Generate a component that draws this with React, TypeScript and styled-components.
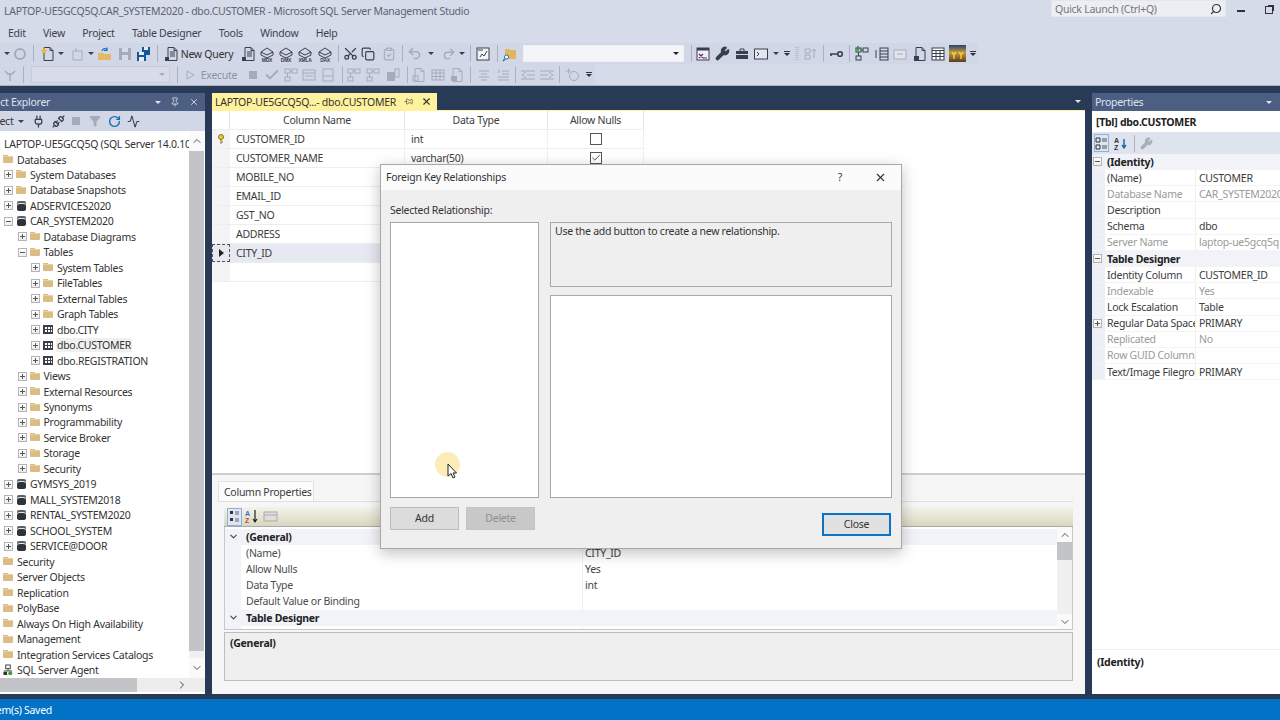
import React from 'react';
import styled, { createGlobalStyle } from 'styled-components';
import { Scissors, Copy, ClipboardCheck, Undo2, Redo2, Wrench, Search, X, Check, Pin, ChevronUp, ChevronDown, ChevronRight, Plug, Unplug, Filter, RotateCw, Activity } from 'lucide-react';

const UI_FONT = '"Noto Sans", "Open Sans", sans-serif';

const GlobalStyle = createGlobalStyle`
  html, body { margin: 0; padding: 0; background: #d6dbe9; }
  * { box-sizing: border-box; }
  #root { width: 1280px; height: 720px; overflow: hidden; }
`;

const Shell = styled.div`
  position: relative;
  width: 1280px;
  height: 720px;
  display: flex;
  flex-direction: column;
  overflow: hidden;
  background: #d6dbe9;
  font-family: ${UI_FONT};
  font-size: 10.5px;
  letter-spacing: -0.27px;
  color: #2c2c2c;
`;

/* ---------- title + menu ---------- */
const TitleRow = styled.div`
  height: 22px;
  flex: none;
  display: flex;
  align-items: flex-start;
  padding-left: 4px;
`;
const TitleText = styled.div`
  flex: 1;
  line-height: 22px;
  color: #5c6472;
  white-space: nowrap;
`;
const QuickLaunch = styled.div`
  width: 175px;
  height: 17px;
  background: #eceef4;
  border: 1px solid #e4e7ef;
  display: flex;
  align-items: center;
  justify-content: space-between;
  padding: 0 3px;
  color: #777;
`;
const WinControls = styled.div`
  width: 54px;
  height: 17px;
  display: flex;
  align-items: center;
  padding-left: 11px;
  gap: 20px;
`;
const MinBtn = styled.span`
  width: 8px;
  height: 2px;
  margin-top: 5px;
  background: #2a3240;
`;
const RestoreBtn = styled.span`
  width: 8px;
  height: 8px;
  margin-top: 3px;
  border: 1px solid #333;
  box-shadow: 2px -2px 0 -1px #333;
`;
const MenuRow = styled.div`
  height: 21px;
  flex: none;
  display: flex;
  align-items: center;
  gap: 17.3px;
  padding-left: 8px;
  color: #3a4250;
`;
const ToolRowBox = styled.div<{ $w: number }>`
  height: 21px;
  flex: none;
  display: flex;
  align-items: center;
  width: ${(p) => p.$w}px;
  background: #d1d7e6;
`;
const Slot = styled.span<{ $w: number; $gap: number }>`
  flex: none;
  width: ${(p) => p.$w}px;
  margin-left: ${(p) => p.$gap}px;
  display: flex;
  align-items: center;
  justify-content: center;
  white-space: nowrap;
`;
const ToolSep = styled.span`
  width: 1px;
  height: 17px;
  background: #a9b1c3;
`;
const DropArrow = styled.span`
  width: 0;
  height: 0;
  border-left: 3px solid transparent;
  border-right: 3px solid transparent;
  border-top: 3px solid ${(p) => p.color || '#3a3f4a'};
`;
const OverflowBtn = styled.span`
  width: 6px;
  height: 5px;
  border-top: 1px solid #333;
  display: flex;
  align-items: flex-end;
  justify-content: center;
  &::after {
    content: '';
    border-left: 3px solid transparent;
    border-right: 3px solid transparent;
    border-top: 3px solid #333;
  }
`;
const ToolLabel = styled.span<{ $off?: boolean }>`
  color: ${(p) => (p.$off ? '#8b93a3' : '#333')};
`;
const Combo = styled.span<{ $off?: boolean }>`
  width: 100%;
  height: 17px;
  background: ${(p) => (p.$off ? '#d8dce8' : '#f4f5f8')};
  border: 1px solid ${(p) => (p.$off ? '#c6ccda' : '#eef0f5')};
  display: flex;
  align-items: center;
  justify-content: flex-end;
  padding-right: 4px;
`;

/* ---------- workspace ---------- */
const Workspace = styled.div`
  flex: 1;
  min-height: 0;
  display: flex;
  background: #293a57;
  border-top: 1px solid #aab4c8;
  padding: 7px 0 5px;
`;
const Status = styled.div`
  height: 21px;
  flex: none;
  background: #0172c6;
  color: #fff;
  display: flex;
  align-items: center;
  overflow: hidden;
`;
const StatusText = styled.span`
  margin-left: -11px;
  white-space: nowrap;
`;
const Panel = styled.section<{ $w: number }>`
  flex: none;
  width: ${(p) => p.$w}px;
  display: flex;
  flex-direction: column;
  background: #fff;
  overflow: hidden;
`;
const PanelTitle = styled.div<{ $inset?: number }>`
  height: 18px;
  flex: none;
  background: #4c5f82;
  color: #dfe4ef;
  display: flex;
  align-items: center;
  justify-content: space-between;
  padding-right: ${(p) => p.$inset ?? 6}px;
  white-space: nowrap;
`;
const PanelButtons = styled.span`
  display: flex;
  align-items: center;
  gap: 9px;
  color: #dfe4ef;
`;
const PanelTitleText = styled.span<{ $shift?: number }>`
  margin-left: ${(p) => p.$shift ?? 3}px;
`;
const ExplorerBar = styled.div`
  height: 20px;
  flex: none;
  display: flex;
  align-items: center;
  overflow: hidden;
`;
const TreeArea = styled.div`
  flex: 1;
  min-height: 0;
  display: flex;
`;
const TreeList = styled.div`
  flex: 1;
  min-width: 0;
  padding-top: 5.3px;
  overflow: hidden;
`;
const TreeRow = styled.div<{ $level: number }>`
  height: 15.48px;
  display: flex;
  align-items: center;
  padding-left: ${(p) => 3 + p.$level * 13.5}px;
  white-space: nowrap;
  color: #333;
`;
const Expander = styled.span`
  flex: none;
  width: 9px;
  height: 9px;
  margin: 0 3px 0 1px;
  border: 1px solid #b4b4b4;
  background: linear-gradient(#fff, #eee);
  position: relative;
  &::before {
    content: '';
    position: absolute;
    left: 1px;
    right: 1px;
    top: 3px;
    height: 1px;
    background: #555;
  }
`;
const PlusExpander = styled(Expander)`
  &::after {
    content: '';
    position: absolute;
    top: 1px;
    bottom: 1px;
    left: 3px;
    width: 1px;
    background: #555;
  }
`;
const NodeIcon = styled.span`
  flex: none;
  width: 10px;
  height: 11px;
  margin-right: 3px;
  display: flex;
  align-items: center;
  justify-content: center;
`;
const Folder = styled.span`
  width: 10px;
  height: 7px;
  background: #dcbc83;
  border-radius: 1px;
  box-shadow: inset 0 1px 0 #e8cf9f;
  position: relative;
  &::before {
    content: '';
    position: absolute;
    left: 0;
    top: -1px;
    width: 5px;
    height: 1px;
    background: #dcbc83;
  }
`;
const Database = styled.span`
  width: 9px;
  height: 10px;
  border-radius: 3px / 2px;
  background: #30333a;
  box-shadow: inset 0 2px 0 #5a5e66, inset 0 3px 0 #e8e8e8;
`;
const TableGlyph = styled.span`
  width: 10px;
  height: 9px;
  border: 1px solid #3b3f47;
  background-color: #fff;
  background-image:
    linear-gradient(#3b3f47 1px, transparent 1px),
    linear-gradient(90deg, #3b3f47 1px, transparent 1px);
  background-size: 3px 3px;
`;
const NodeLabel = styled.span<{ $hl?: boolean }>`
  padding: 0 1px;
  background: ${(p) => (p.$hl ? '#f0f0f0' : 'transparent')};
`;
const VScroll = styled.div`
  flex: none;
  width: 15px;
  display: flex;
  flex-direction: column;
  background: #f0f0f0;
  align-items: center;
`;
const ScrollCap = styled.div<{ $h?: number }>`
  flex: none;
  width: 100%;
  height: ${(p) => p.$h ?? 15}px;
  display: flex;
  align-items: center;
  justify-content: center;
  color: #555;
  background: #fafafa;
`;
const ScrollThumb = styled.div<{ $h: number }>`
  flex: none;
  width: 100%;
  height: ${(p) => p.$h}px;
  background: #c3c4c8;
`;
const ScrollRest = styled.div`
  flex: 1;
  width: 100%;
  background: #f0f0f0;
`;
const TreeEdge = styled.div`
  flex: none;
  width: 1px;
  background: #fff;
`;
const HScroll = styled.div`
  height: 14px;
  flex: none;
  display: flex;
  background: #ededed;
  margin-bottom: 2px;
`;
const HThumb = styled.div`
  width: 137px;
  background: #c3c4c8;
`;
const HArrow = styled.div`
  width: 52px;
  display: flex;
  align-items: center;
  justify-content: flex-end;
  padding-right: 1px;
  color: #444;
`;

/* ---------- centre document ---------- */
const Center = styled.main`
  flex: none;
  width: 873px;
  margin: 0 7px;
  display: flex;
  flex-direction: column;
`;
const TabStrip = styled.div`
  height: 18px;
  flex: none;
  display: flex;
  align-items: stretch;
  justify-content: space-between;
  padding-right: 4px;
  border-bottom: 1px solid #fff29d;
`;
const DocTab = styled.div`
  width: 225px;
  background: #fff29d;
  color: #333;
  display: flex;
  align-items: center;
  padding: 0 5px 0 3px;
  justify-content: space-between;
  white-space: nowrap;
`;
const TabIcons = styled.span`
  display: flex;
  align-items: center;
  gap: 8px;
`;
const StripArrow = styled.span`
  display: flex;
  align-items: center;
`;
const DocBody = styled.div`
  flex: 1;
  min-height: 0;
  display: flex;
  flex-direction: column;
  background: #fff;
`;
const Designer = styled.div`
  height: 364px;
  flex: none;
  border-bottom: 2px solid #cfcfcf;
`;
const GridRow = styled.div<{ $h: number }>`
  height: ${(p) => p.$h}px;
  width: 432px;
  display: grid;
  grid-template-columns: 18px 175px 143px 96px;
  border-bottom: 1px solid #eee;
  color: #3c3c3c;
`;
const HeadCell = styled.div`
  display: flex;
  align-items: center;
  justify-content: center;
  padding-bottom: 1px;
  border-right: 1px solid #e4e4e4;
`;
const RowHead = styled.div<{ $current?: boolean }>`
  display: flex;
  align-items: center;
  justify-content: center;
  background: ${(p) => (p.$current ? '#e6e9f2' : '#f4f4f6')};
  border: ${(p) => (p.$current ? '1px dashed #555' : '0')};
`;
const Cell = styled.div<{ $sel?: boolean }>`
  display: flex;
  align-items: center;
  padding-left: 6px;
  white-space: nowrap;
  background: ${(p) => (p.$sel ? '#e6e9f2' : 'transparent')};
  border-right: 1px solid #f0f0f0;
`;
const NullCell = styled(Cell)`
  justify-content: center;
  padding: 0;
`;
const CheckBox = styled.span`
  width: 12px;
  height: 12px;
  border: 1px solid #555;
  background: #fff;
  display: flex;
  align-items: center;
  justify-content: center;
`;
const Arrowhead = styled.span`
  width: 0;
  height: 0;
  border-top: 4px solid transparent;
  border-bottom: 4px solid transparent;
  border-left: 5px solid #222;
`;

const Lower = styled.div`
  flex: 1;
  min-height: 0;
  background: #f6f6f6;
  padding: 6px 12px 10px 6px;
  display: flex;
  flex-direction: column;
`;
const LowerTab = styled.div`
  width: 96px;
  height: 20px;
  flex: none;
  padding-left: 5px;
  display: flex;
  align-items: center;
  white-space: nowrap;
  background: #fbfbfb;
  border: 1px solid #e2e2e2;
  border-bottom: 0;
  color: #3c3c3c;
`;
const LowerFrame = styled.div`
  flex: 1;
  min-height: 0;
  border-top: 1px solid #dedede;
  padding: 5px 0 0 6px;
  display: flex;
  flex-direction: column;
`;
const CatBar = styled.div`
  height: 20px;
  flex: none;
  display: flex;
  align-items: center;
  gap: 3px;
  padding-left: 3px;
  background: linear-gradient(#f3f3ea, #d8d8c0);
  border-bottom: 1px solid #a9a9a9;
`;
const CatButton = styled.span<{ $on?: boolean }>`
  width: 15px;
  height: 18px;
  display: flex;
  align-items: center;
  justify-content: center;
  background: ${(p) => (p.$on ? '#dce6f4' : 'transparent')};
  border: ${(p) => (p.$on ? '1px solid #8fb0d8' : '0')};
`;
const PropWrap = styled.div`
  height: 103px;
  flex: none;
  display: flex;
  background: #fff;
  border: 1px solid #c8c8c8;
  border-top: 0;
`;
const PropRows = styled.div`
  flex: 1;
  min-width: 0;
  padding-top: 1.6px;
  overflow: hidden;
`;
const PropRow = styled.div<{ $head?: boolean }>`
  height: 16.2px;
  display: grid;
  grid-template-columns: 16px 341px 1fr;
  align-items: center;
  background: ${(p) => (p.$head ? '#f1f3f9' : '#fff')};
  color: #444;
  white-space: nowrap;
`;
const Strip = styled.span`
  height: 100%;
  display: flex;
  align-items: center;
  justify-content: center;
  background: #f1f3f9;
  color: #444;
`;
const PropName = styled.span<{ $bold?: boolean }>`
  padding-left: 5px;
  font-weight: ${(p) => (p.$bold ? 700 : 400)};
  color: ${(p) => (p.$bold ? '#222' : '#4c4c4c')};
`;
const PropValue = styled.span`
  height: 100%;
  display: flex;
  align-items: center;
  padding-left: 2px;
  border-left: 1px solid #f0f0f0;
`;
const DescBox = styled.div`
  height: 49px;
  flex: none;
  margin-top: 2px;
  padding: 3px 5px;
  border: 1px solid #bdbdbd;
  background: #efefef;
  font-weight: 700;
  color: #222;
`;

/* ---------- properties ---------- */
const PropsHeader = styled.div`
  height: 21px;
  flex: none;
  display: flex;
  align-items: center;
  padding-left: 4px;
  font-weight: 700;
  color: #222;
`;
const PropsBar = styled.div`
  height: 22px;
  flex: none;
  display: flex;
  align-items: center;
  gap: 5px;
  padding-left: 2px;
  background: #dfe3ee;
`;
const PropsList = styled.div`
  flex: 1;
  min-height: 0;
  overflow: hidden;
`;
const SideRow = styled.div<{ $head?: boolean }>`
  height: 16.17px;
  display: grid;
  grid-template-columns: 13px 90px 1fr;
  align-items: center;
  white-space: nowrap;
  background: ${(p) => (p.$head ? '#f1f3f9' : '#fff')};
  border-bottom: 1px solid #f4f4f4;
`;
const SideStrip = styled.span`
  height: 100%;
  display: flex;
  align-items: center;
  justify-content: center;
  background: #eceff6;
`;
const SideName = styled.span<{ $off?: boolean; $bold?: boolean }>`
  padding-left: 2px;
  overflow: hidden;
  font-weight: ${(p) => (p.$bold ? 700 : 400)};
  color: ${(p) => (p.$bold ? '#222' : p.$off ? '#9a9a9a' : '#3c3c3c')};
`;
const SideValue = styled.span<{ $off?: boolean }>`
  padding-left: 3px;
  height: 100%;
  display: flex;
  align-items: center;
  overflow: hidden;
  border-left: 1px solid #f0f0f0;
  color: ${(p) => (p.$off ? '#9a9a9a' : '#3c3c3c')};
`;
const PropsDesc = styled.div`
  height: 45px;
  flex: none;
  border-top: 1px solid #f0f0f0;
  padding: 5px 5px;
  font-weight: 700;
  color: #222;
`;

/* ---------- dialog ---------- */
const Dialog = styled.div`
  position: absolute;
  left: 380px;
  top: 164px;
  width: 522px;
  height: 385px;
  background: #efefef;
  border: 1px solid #a8a8a8;
  box-shadow: 0 4px 14px rgba(0, 0, 0, 0.25);
  display: flex;
  flex-direction: column;
`;
const DialogTitle = styled.div`
  height: 25px;
  flex: none;
  background: #fbfbfb;
  display: flex;
  align-items: center;
  justify-content: space-between;
  padding: 0 14px 1px 5px;
  color: #333;
`;
const DialogIcons = styled.span`
  display: flex;
  align-items: center;
  gap: 32px;
`;
const DialogBody = styled.div`
  flex: 1;
  min-height: 0;
  display: flex;
  flex-direction: column;
  padding: 13px 9px 11px 9px;
`;
const FieldLabel = styled.div`
  height: 19px;
  flex: none;
  color: #333;
`;
const Panes = styled.div`
  height: 276px;
  flex: none;
  display: grid;
  grid-template-columns: 149px 342px;
  column-gap: 11px;
`;
const ListPane = styled.div`
  background: #fff;
  border: 1px solid #a8a8a8;
`;
const RightPanes = styled.div`
  display: flex;
  flex-direction: column;
  gap: 8px;
`;
const HintPane = styled.div`
  height: 65px;
  flex: none;
  padding: 1px 4px;
  border: 1px solid #a8a8a8;
  color: #333;
`;
const DetailPane = styled.div`
  flex: 1;
  background: #fff;
  border: 1px solid #a8a8a8;
`;
const DialogFooter = styled.div`
  flex: 1;
  display: flex;
  justify-content: space-between;
  padding-top: 9px;
`;
const FooterLeft = styled.div`
  display: flex;
  gap: 7px;
`;
const DlgButton = styled.button<{ $off?: boolean; $primary?: boolean }>`
  width: 69px;
  height: 23px;
  padding: 0 0 2px;
  font: inherit;
  letter-spacing: inherit;
  margin-top: ${(p) => (p.$primary ? 6 : 0)}px;
  margin-right: ${(p) => (p.$primary ? 1 : 0)}px;
  color: ${(p) => (p.$off ? '#8f8f8f' : '#333')};
  background: ${(p) => (p.$off ? '#c8c8c8' : p.$primary ? '#e1e1e1' : '#dcdcdc')};
  border: ${(p) => (p.$primary ? '2px solid #0a72c8' : p.$off ? '1px solid #c4c4c4' : '1px solid #bdbdbd')};
`;
const CursorGlow = styled.span`
  position: absolute;
  left: 435px;
  top: 452px;
  width: 25px;
  height: 25px;
  border-radius: 50%;
  background: #fbecb8;
`;
const CursorArrow = styled.svg`
  position: absolute;
  left: 447px;
  top: 463px;
`;

/* ---------- toolbar icons ---------- */
const G = '#a4acbb';
const D = '#39404c';

const Doc = ({ c }: { c: string }) => (
  <path d="M4 1.5h6l3 3v10H4z M10 1.5v3h3" fill="none" stroke={c} strokeWidth="1" />
);
const Boxes = ({ c }: { c: string }) => (
  <g fill="none" stroke={c}>
    <rect x="2" y="2" width="5" height="4" />
    <rect x="9" y="2" width="5" height="4" />
    <rect x="2" y="10" width="5" height="4" />
    <path d="M7 4h2M4.5 6v4" />
  </g>
);

function Svg({ children, size = 16 }: { children: React.ReactNode; size?: number }) {
  return (
    <svg width={size} height={size} viewBox="0 0 16 16">
      {children}
    </svg>
  );
}

function Tool({ k, label }: { k: string; label?: string }) {
  switch (k) {
    case 'circle':
      return <Svg><circle cx="8" cy="8" r="5" fill="none" stroke={G} strokeWidth="2" /></Svg>;
    case 'new':
      return <Svg><Doc c={D} /><path d="M4 1l1 2.4L7.5 4 5.6 5.6 6 8 4 6.8 2 8l.4-2.4L.5 4 3 3.4z" fill="#e8b83a" /></Svg>;
    case 'file':
      return <Svg><path d="M3 5h9v9H3z M6 2v3" fill="none" stroke={G} /></Svg>;
    case 'open':
      return <Svg><path d="M1 7h5l1 1h7v6H1z" fill="#e3b866" /><path d="M5 5c1-3 4-3 5-1M10 1.5V4.500H7" fill="none" stroke="#1b6fb0" strokeWidth="1.2" /></Svg>;
    case 'save':
      return <Svg><path d="M2 2h11l1 1v11H2z" fill={G} /><path d="M5 2h6v4H5zM5 9h6v5H5z" fill="#d6dbe9" /></Svg>;
    case 'saveall':
      return <Svg><path d="M6 1h8v8H6z" fill="#0e5a9c" /><path d="M8 1h4v3H8z" fill="#e6edf6" /><path d="M1 6h9v9H1z" fill="#0e5a9c" /><path d="M3 6h5v3H3zM3 11h5v4H3z" fill="#e6edf6" /></Svg>;
    case 'query':
      return <Svg><Doc c={D} /><path d="M6 6h5M6 8h5M6 10h5" stroke={D} /><path d="M1 11h4v4H1z" fill={D} /></Svg>;
    case 'cube':
      return (
        <Svg>
          <path d="M2 6l6-4 6 4v3l-6 3-6-3z M2 6l6 3 6-3" fill="none" stroke={D} />
          <text x="8" y="15.500" textAnchor="middle" fontSize="5" fontWeight="700" fill={D} fontFamily="Liberation Sans, sans-serif">{label}</text>
        </Svg>
      );
    case 'cut':
      return <Scissors size={15} color={D} style={{ transform: 'rotate(-90deg)' }} />;
    case 'copy':
      return <Copy size={14} color={D} />;
    case 'paste':
      return <ClipboardCheck size={14} color={G} />;
    case 'undo':
      return <Undo2 size={15} color={G} strokeWidth={2.4} />;
    case 'redo':
      return <Redo2 size={14} color={G} strokeWidth={2.4} />;
    case 'report':
      return <Svg><rect x="2" y="2" width="12" height="12" fill="#f2f3f6" stroke={D} /><path d="M5 11l2-3 2 2 3-5" fill="none" stroke={D} /><path d="M3 4h5" stroke={D} /></Svg>;
    case 'find':
      return <Svg><path d="M3 3h4l1 1h6v9H3z" fill="#e3b45c" /><circle cx="4.500" cy="11" r="2" fill="#fff" stroke="#1b6fb0" /><path d="M3 13l-2 2" stroke="#1b6fb0" strokeWidth="1.4" /></Svg>;
    case 'vs':
      return <Svg><rect x="2" y="2" width="12" height="12" fill="#eef0f5" stroke={D} /><path d="M2 2h12v2.500H2z" fill={D} /><path d="M4 8l4 4M4 12l4-4M8 12h4" stroke="#68217a" strokeWidth="1.2" fill="none" /></Svg>;
    case 'wrench':
      return <Wrench size={15} color={D} fill={D} />;
    case 'toolbox':
      return <Svg><path d="M6 5V3h4v2" fill="none" stroke={D} /><path d="M2 5h12v3H2zM2 9h12v4H2z" fill={D} /></Svg>;
    case 'terminal':
      return <Svg><rect x="1.500" y="3" width="13" height="10" fill="#e4e7ef" stroke={D} /><path d="M4 6l2 2-2 2" fill="none" stroke={D} /></Svg>;
    case 'grip':
      return <Svg><path d="M7 1v14M9 1v14" stroke={G} strokeDasharray="1 1" /></Svg>;
    case 'gridoff':
      return <Svg><path d="M3 3h5v4H3zM3 9h5v4H3z" fill="none" stroke={G} /><path d="M12 3v9M10 5l2-2 2 2" fill="none" stroke={G} /></Svg>;
    case 'key':
      return <Svg><circle cx="12" cy="8" r="2.300" fill="none" stroke={D} strokeWidth="1.600" /><path d="M2 8h8M3 8v2" stroke={D} strokeWidth="1.600" /></Svg>;
    case 'addtable':
      return <Svg><Boxes c={D} /><path d="M4 0v5M1.500 2.500h5" stroke="#2d9a3a" strokeWidth="1.600" /></Svg>;
    case 'index':
      return <Svg><rect x="6" y="2" width="8" height="12" fill="none" stroke={D} /><path d="M6 5h8M6 8h8M6 11h8" stroke={D} /><path d="M2 4v8" stroke={D} /></Svg>;
    case 'spatial':
      return <Svg><rect x="2" y="4" width="12" height="9" fill="#e1e4ec" stroke={G} /><path d="M5 8h6" stroke={G} /></Svg>;
    case 'check':
      return <Svg><Doc c={D} /><rect x="2" y="10" width="5" height="5" fill={D} /></Svg>;
    case 'tablegrid':
      return <Svg><rect x="2" y="2" width="12" height="12" fill="#fff" stroke={D} /><path d="M2 4.500h12M2 7.500h12M2 10.500h12M6 4.500v9.500M10 4.500v9.500" stroke={D} /></Svg>;
    case 'picture':
      return (
        <svg width="17" height="17" viewBox="0 0 17 17">
          <defs>
            <linearGradient id="pic" x1="0" y1="0" x2="0" y2="1">
              <stop offset="0" stopColor="#24456e" />
              <stop offset="0.45" stopColor="#c79a3c" />
              <stop offset="1" stopColor="#5a3b22" />
            </linearGradient>
          </defs>
          <rect width="17" height="17" fill="url(#pic)" />
          <path d="M3 7l2 3 2-3M10 7l2 3 2-3M5 10v4M12 10v4" stroke="#f2d23a" strokeWidth="1.400" fill="none" />
        </svg>
      );
    case 'plug':
      return <Svg><path d="M3 4l3 3M13 4l-3 3M8 6v8M5 7h6" stroke={G} strokeWidth="1.500" fill="none" /></Svg>;
    case 'plugd':
      return <Plug size={13} color={D} strokeWidth={2.4} />;
    case 'plugx':
      return <Unplug size={13} color={D} strokeWidth={2.4} />;
    case 'filter':
      return <Filter size={12} color={G} fill={G} />;
    case 'refresh':
      return <RotateCw size={13} color="#1b6fb0" strokeWidth={2.6} />;
    case 'activity':
      return <Activity size={13} color={D} strokeWidth={2} />;
    case 'play':
      return <Svg><path d="M5 4l7 4-7 4z" fill="none" stroke={G} /></Svg>;
    case 'stop':
      return <Svg><rect x="4" y="4" width="8" height="8" fill={G} /></Svg>;
    case 'tick':
      return <Check size={16} color={G} strokeWidth={3} />;
    case 'boxes':
      return <Svg><Boxes c={G} /></Svg>;
    case 'win':
      return <Svg><rect x="2" y="3" width="12" height="10" fill="none" stroke={G} /><path d="M2 6h12M4 9h8" stroke={G} /></Svg>;
    case 'panel':
      return <Svg><rect x="3" y="2" width="10" height="12" fill="none" stroke={G} /><path d="M3 9h10" stroke={G} /></Svg>;
    case 'sheet':
      return <Svg><rect x="2" y="5" width="8" height="9" fill={G} /><rect x="10" y="2" width="4" height="8" fill="none" stroke={G} /></Svg>;
    case 'docgrid':
      return <Svg><Doc c={G} /><rect x="2" y="9" width="5" height="5" fill="none" stroke={G} /></Svg>;
    case 'gridfull':
      return <Svg><rect x="2" y="3" width="12" height="10" fill="none" stroke={G} /><path d="M2 6h12M2 9.500h12M6 3v10M10 3v10" stroke={G} /></Svg>;
    case 'doclock':
      return <Svg><Doc c={G} /><rect x="2" y="9" width="6" height="5" fill={G} /></Svg>;
    case 'lines':
      return <Svg><path d="M3 4h10M5 7h6M3 10h10M5 13h6" stroke={G} /></Svg>;
    case 'qlines':
      return <Svg><path d="M7 4h7M7 7h7M3 10h11M3 13h11" stroke={G} /><path d="M3 3c2-1 2 2 0 2v1" fill="none" stroke={G} /></Svg>;
    case 'outdent':
      return <Svg><path d="M1 4h14M1 12h14M7 8h8M6 5L2 8l4 3" fill="none" stroke={G} /></Svg>;
    case 'indent':
      return <Svg><path d="M1 4h14M1 12h14M1 8h8M10 5l4 3-4 3" fill="none" stroke={G} /></Svg>;
    case 'spec':
      return <Svg><circle cx="9" cy="9" r="4.500" fill="none" stroke={G} /><path d="M1 4h5M3.500 1.500v5" stroke={G} /></Svg>;
    default:
      return null;
  }
}

type Item = { c: number; k: string; w?: number; label?: string };

function baseWidth(it: Item) {
  if (it.w) return it.w;
  if (it.k === 'sep') return 1;
  if (it.k === 'drop' || it.k === 'over') return 6;
  return 16;
}

function ToolStrip({ items, off, width }: { items: Item[]; off?: boolean; width: number }) {
  let end = 0;
  return (
    <ToolRowBox $w={width}>
      {items.map((it, i) => {
        const w = baseWidth(it);
        const gap = it.c - w / 2 - end;
        end = it.c + w / 2;
        let inner: React.ReactNode;
        if (it.k === 'sep') inner = <ToolSep />;
        else if (it.k === 'drop') inner = <DropArrow />;
        else if (it.k === 'over') inner = <OverflowBtn />;
        else if (it.k === 'text') inner = <ToolLabel $off={off}>{it.label}</ToolLabel>;
        else if (it.k === 'combo') inner = <Combo $off={off}><DropArrow color={off ? '#a8aebb' : '#222'} /></Combo>;
        else inner = <Tool k={it.k} label={it.label} />;
        return <Slot key={i} $w={w} $gap={gap}>{inner}</Slot>;
      })}
    </ToolRowBox>
  );
}

const topTools: Item[] = [
  { c: 7, k: 'drop' }, { c: 20, k: 'circle' }, { c: 33, k: 'sep' }, { c: 48, k: 'new' }, { c: 61, k: 'drop' },
  { c: 78, k: 'file' }, { c: 91, k: 'drop' }, { c: 105, k: 'open' }, { c: 125, k: 'save' }, { c: 144, k: 'saveall' },
  { c: 157, k: 'sep' }, { c: 172, k: 'query' }, { c: 207, k: 'text', w: 52, label: 'New Query' }, { c: 249, k: 'query' },
  { c: 267, k: 'cube', label: 'MDX' }, { c: 286, k: 'cube', label: 'DMX' }, { c: 305, k: 'cube', label: 'XMLA' },
  { c: 325, k: 'cube', label: 'DAX' }, { c: 338, k: 'sep' }, { c: 350, k: 'cut' }, { c: 368, k: 'copy' }, { c: 389, k: 'paste' },
  { c: 402, k: 'sep' }, { c: 414, k: 'undo' }, { c: 431, k: 'drop' }, { c: 449, k: 'redo' }, { c: 462, k: 'drop' },
  { c: 470, k: 'sep' }, { c: 483, k: 'report' }, { c: 497, k: 'sep' }, { c: 510, k: 'find' },
  { c: 603, k: 'combo', w: 161 }, { c: 691, k: 'sep' }, { c: 703, k: 'vs' }, { c: 722, k: 'wrench' }, { c: 742, k: 'toolbox' },
  { c: 761, k: 'terminal' }, { c: 776, k: 'drop' }, { c: 787, k: 'over' }, { c: 797, k: 'grip' }, { c: 810, k: 'gridoff' },
  { c: 823, k: 'sep' }, { c: 836, k: 'key' }, { c: 849, k: 'sep' }, { c: 862, k: 'addtable' }, { c: 882, k: 'index' },
  { c: 900, k: 'spatial' }, { c: 920, k: 'check' }, { c: 938, k: 'tablegrid' }, { c: 957, k: 'picture', w: 17 }, { c: 973, k: 'over' },
];

const bottomTools: Item[] = [
  { c: 10, k: 'plug' }, { c: 23, k: 'sep' }, { c: 100, k: 'combo', w: 139 }, { c: 177, k: 'sep' }, { c: 190, k: 'play' },
  { c: 219, k: 'text', w: 37, label: 'Execute' }, { c: 253, k: 'stop' }, { c: 272, k: 'tick' }, { c: 291, k: 'boxes' },
  { c: 309, k: 'win' }, { c: 328, k: 'panel' }, { c: 342, k: 'sep' }, { c: 354, k: 'boxes' }, { c: 373, k: 'boxes' },
  { c: 393, k: 'sheet' }, { c: 407, k: 'sep' }, { c: 419, k: 'docgrid' }, { c: 438, k: 'gridfull' }, { c: 457, k: 'doclock' },
  { c: 470, k: 'sep' }, { c: 484, k: 'lines' }, { c: 503, k: 'qlines' }, { c: 515, k: 'sep' }, { c: 528, k: 'outdent' },
  { c: 547, k: 'indent' }, { c: 559, k: 'sep' }, { c: 573, k: 'spec' }, { c: 589, k: 'over' },
];

const explorerTools: Item[] = [
  { c: -6, k: 'text', w: 38, label: 'Connect' }, { c: 21, k: 'drop' }, { c: 38, k: 'plugd' }, { c: 58, k: 'plugx' },
  { c: 76, k: 'stop' }, { c: 95, k: 'filter' }, { c: 114, k: 'refresh' }, { c: 133, k: 'activity' },
];

type Node = { text: string; level: number; exp?: 'plus' | 'minus'; icon?: 'folder' | 'db' | 'table' | 'agent'; hl?: boolean };

const treeNodes: Node[] = [
  { text: 'LAPTOP-UE5GCQ5Q (SQL Server 14.0.10', level: 0 },
  { text: 'Databases', level: 0, icon: 'folder' },
  { text: 'System Databases', level: 0, exp: 'plus', icon: 'folder' },
  { text: 'Database Snapshots', level: 0, exp: 'plus', icon: 'folder' },
  { text: 'ADSERVICES2020', level: 0, exp: 'plus', icon: 'db' },
  { text: 'CAR_SYSTEM2020', level: 0, exp: 'minus', icon: 'db' },
  { text: 'Database Diagrams', level: 1, exp: 'plus', icon: 'folder' },
  { text: 'Tables', level: 1, exp: 'minus', icon: 'folder' },
  { text: 'System Tables', level: 2, exp: 'plus', icon: 'folder' },
  { text: 'FileTables', level: 2, exp: 'plus', icon: 'folder' },
  { text: 'External Tables', level: 2, exp: 'plus', icon: 'folder' },
  { text: 'Graph Tables', level: 2, exp: 'plus', icon: 'folder' },
  { text: 'dbo.CITY', level: 2, exp: 'plus', icon: 'table' },
  { text: 'dbo.CUSTOMER', level: 2, exp: 'plus', icon: 'table', hl: true },
  { text: 'dbo.REGISTRATION', level: 2, exp: 'plus', icon: 'table' },
  { text: 'Views', level: 1, exp: 'plus', icon: 'folder' },
  { text: 'External Resources', level: 1, exp: 'plus', icon: 'folder' },
  { text: 'Synonyms', level: 1, exp: 'plus', icon: 'folder' },
  { text: 'Programmability', level: 1, exp: 'plus', icon: 'folder' },
  { text: 'Service Broker', level: 1, exp: 'plus', icon: 'folder' },
  { text: 'Storage', level: 1, exp: 'plus', icon: 'folder' },
  { text: 'Security', level: 1, exp: 'plus', icon: 'folder' },
  { text: 'GYMSYS_2019', level: 0, exp: 'plus', icon: 'db' },
  { text: 'MALL_SYSTEM2018', level: 0, exp: 'plus', icon: 'db' },
  { text: 'RENTAL_SYSTEM2020', level: 0, exp: 'plus', icon: 'db' },
  { text: 'SCHOOL_SYSTEM', level: 0, exp: 'plus', icon: 'db' },
  { text: 'SERVICE@DOOR', level: 0, exp: 'plus', icon: 'db' },
  { text: 'Security', level: 0, icon: 'folder' },
  { text: 'Server Objects', level: 0, icon: 'folder' },
  { text: 'Replication', level: 0, icon: 'folder' },
  { text: 'PolyBase', level: 0, icon: 'folder' },
  { text: 'Always On High Availability', level: 0, icon: 'folder' },
  { text: 'Management', level: 0, icon: 'folder' },
  { text: 'Integration Services Catalogs', level: 0, icon: 'folder' },
  { text: 'SQL Server Agent', level: 0, icon: 'agent' },
];

const columns: { name: string; type?: string; key?: boolean; nulls?: boolean; current?: boolean }[] = [
  { name: 'CUSTOMER_ID', type: 'int', key: true, nulls: false },
  { name: 'CUSTOMER_NAME', type: 'varchar(50)', nulls: true },
  { name: 'MOBILE_NO' },
  { name: 'EMAIL_ID' },
  { name: 'GST_NO' },
  { name: 'ADDRESS' },
  { name: 'CITY_ID', current: true },
];

const sideRows: { n: string; v?: string; off?: boolean; head?: boolean; exp?: 'plus' | 'minus' }[] = [
  { n: '(Identity)', head: true, exp: 'minus' },
  { n: '(Name)', v: 'CUSTOMER' },
  { n: 'Database Name', v: 'CAR_SYSTEM2020', off: true },
  { n: 'Description' },
  { n: 'Schema', v: 'dbo' },
  { n: 'Server Name', v: 'laptop-ue5gcq5q', off: true },
  { n: 'Table Designer', head: true, exp: 'minus' },
  { n: 'Identity Column', v: 'CUSTOMER_ID' },
  { n: 'Indexable', v: 'Yes', off: true },
  { n: 'Lock Escalation', v: 'Table' },
  { n: 'Regular Data Space', v: 'PRIMARY', exp: 'plus' },
  { n: 'Replicated', v: 'No', off: true },
  { n: 'Row GUID Column', off: true },
  { n: 'Text/Image Filegroup', v: 'PRIMARY' },
];

const lowerRows: { n: string; v?: string; head?: boolean }[] = [
  { n: '(General)', head: true },
  { n: '(Name)', v: 'CITY_ID' },
  { n: 'Allow Nulls', v: 'Yes' },
  { n: 'Data Type', v: 'int' },
  { n: 'Default Value or Binding' },
  { n: 'Table Designer', head: true },
  { n: 'Collation', v: '<database default>' },
];

function NodeGlyph({ icon }: { icon?: Node['icon'] }) {
  if (icon === 'folder') return <NodeIcon><Folder /></NodeIcon>;
  if (icon === 'db') return <NodeIcon><Database /></NodeIcon>;
  if (icon === 'table') return <NodeIcon><TableGlyph /></NodeIcon>;
  if (icon === 'agent') {
    return (
      <NodeIcon>
        <svg width="11" height="12" viewBox="0 0 11 12">
          <rect x="3" y="0.500" width="5" height="4" fill="#fff" stroke="#333" />
          <path d="M5.500 4.500v2M1 7h9" stroke="#333" />
          <rect x="0.500" y="8" width="4" height="3.500" fill="#333" />
          <circle cx="8" cy="9.500" r="2.200" fill="#3f9a3f" />
        </svg>
      </NodeIcon>
    );
  }
  return null;
}

export default function App() {
  return (
    <Shell>
      <GlobalStyle />
      <TitleRow>
        <TitleText>LAPTOP-UE5GCQ5Q.CAR_SYSTEM2020 - dbo.CUSTOMER - Microsoft SQL Server Management Studio</TitleText>
        <QuickLaunch>
          <span>Quick Launch (Ctrl+Q)</span>
          <Search size={12} color="#333" strokeWidth={2.4} style={{ transform: 'scaleX(-1)' }} />
        </QuickLaunch>
        <WinControls>
          <MinBtn />
          <RestoreBtn />
        </WinControls>
      </TitleRow>
      <MenuRow>
        {['Edit', 'View', 'Project', 'Table Designer', 'Tools', 'Window', 'Help'].map((m) => (
          <span key={m}>{m}</span>
        ))}
      </MenuRow>
      <ToolStrip items={topTools} width={978} />
      <ToolStrip items={bottomTools} off width={595} />

      <Workspace>
        <Panel $w={205}>
          <PanelTitle>
            <PanelTitleText $shift={-22}>Object Explorer</PanelTitleText>
            <PanelButtons>
              <DropArrow color="#dfe4ef" />
              <Pin size={10} color="#dfe4ef" />
              <X size={10} color="#dfe4ef" />
            </PanelButtons>
          </PanelTitle>
          <ExplorerBar>
            <ToolStrip items={explorerTools} width={205} />
          </ExplorerBar>
          <TreeArea>
            <TreeList>
              {treeNodes.map((n, i) => (
                <TreeRow key={i} $level={n.level}>
                  {n.exp === 'plus' && <PlusExpander />}
                  {n.exp === 'minus' && <Expander />}
                  <NodeGlyph icon={n.icon} />
                  <NodeLabel $hl={n.hl}>{n.text}</NodeLabel>
                </TreeRow>
              ))}
            </TreeList>
            <VScroll>
              <ScrollCap $h={20}><ChevronUp size={12} /></ScrollCap>
              <ScrollThumb $h={500} />
              <ScrollRest />
              <ScrollCap $h={20}><ChevronDown size={12} /></ScrollCap>
            </VScroll>
            <TreeEdge />
          </TreeArea>
          <HScroll>
            <HThumb />
            <HArrow><ChevronRight size={12} /></HArrow>
          </HScroll>
        </Panel>

        <Center>
          <TabStrip>
            <DocTab>
              <span>LAPTOP-UE5GCQ5Q...- dbo.CUSTOMER</span>
              <TabIcons>
                <Pin size={9} color="#555" style={{ transform: 'rotate(90deg)' }} />
                <X size={11} color="#333" strokeWidth={2.4} />
              </TabIcons>
            </DocTab>
            <StripArrow><DropArrow color="#dfe4ef" /></StripArrow>
          </TabStrip>
          <DocBody>
            <Designer>
              <GridRow $h={19}>
                <HeadCell />
                <HeadCell>Column Name</HeadCell>
                <HeadCell>Data Type</HeadCell>
                <HeadCell>Allow Nulls</HeadCell>
              </GridRow>
              {columns.map((col) => (
                <GridRow $h={19} key={col.name}>
                  <RowHead $current={col.current}>
                    {col.key && (
                      <svg width="8" height="11" viewBox="0 0 8 11">
                        <circle cx="4" cy="3" r="2.500" fill="#e6c83a" stroke="#8a7a20" />
                        <path d="M4 5v5M4 8h2" stroke="#8a7a20" />
                      </svg>
                    )}
                    {col.current && <Arrowhead />}
                  </RowHead>
                  <Cell $sel={col.current}>{col.name}</Cell>
                  <Cell $sel={col.current}>{col.type}</Cell>
                  <NullCell $sel={col.current}>
                    {col.nulls !== undefined && (
                      <CheckBox>{col.nulls && <Check size={10} color="#333" />}</CheckBox>
                    )}
                  </NullCell>
                </GridRow>
              ))}
              <GridRow $h={19}>
                <RowHead />
                <Cell />
                <Cell />
                <NullCell />
              </GridRow>
            </Designer>
            <Lower>
              <LowerTab>Column Properties</LowerTab>
              <LowerFrame>
                <CatBar>
                  <CatButton $on>
                    <svg width="11" height="13" viewBox="0 0 11 13">
                      <path d="M1 1h3v3H1zM1 8h3v3H1z" fill="#333" />
                      <path d="M6 2h4M6 4h4M6 9h4M6 11h4" stroke="#666" />
                    </svg>
                  </CatButton>
                  <CatButton>
                    <svg width="15" height="15" viewBox="0 0 15 15">
                      <text x="0" y="7" fontSize="7" fontWeight="700" fill="#4472b8" fontFamily="Liberation Sans, sans-serif">A</text>
                      <text x="0" y="14" fontSize="7" fontWeight="700" fill="#c04a3a" fontFamily="Liberation Sans, sans-serif">Z</text>
                      <path d="M10 1v12M8 10l2 3 2-3" fill="none" stroke="#222" strokeWidth="1.200" />
                    </svg>
                  </CatButton>
                  <CatButton>
                    <svg width="15" height="13" viewBox="0 0 15 13">
                      <rect x="1" y="2" width="13" height="9" fill="#ddd" stroke="#aaa" />
                      <path d="M1 5h13" stroke="#aaa" />
                    </svg>
                  </CatButton>
                </CatBar>
                <PropWrap>
                  <PropRows>
                    {lowerRows.map((r) => (
                      <PropRow key={r.n} $head={r.head}>
                        <Strip>{r.head && <ChevronDown size={11} strokeWidth={2.4} />}</Strip>
                        <PropName $bold={r.head}>{r.n}</PropName>
                        {!r.head && <PropValue>{r.v}</PropValue>}
                      </PropRow>
                    ))}
                  </PropRows>
                  <VScroll>
                    <ScrollCap><ChevronUp size={12} /></ScrollCap>
                    <ScrollThumb $h={18} />
                    <ScrollRest />
                    <ScrollCap><ChevronDown size={12} /></ScrollCap>
                  </VScroll>
                </PropWrap>
                <DescBox>(General)</DescBox>
              </LowerFrame>
            </Lower>
          </DocBody>
        </Center>

        <Panel $w={188}>
          <PanelTitle $inset={8}>
            <PanelTitleText>Properties</PanelTitleText>
            <PanelButtons><DropArrow color="#dfe4ef" /></PanelButtons>
          </PanelTitle>
          <PropsHeader>[Tbl] dbo.CUSTOMER</PropsHeader>
          <PropsBar>
            <CatButton $on>
              <svg width="13" height="13" viewBox="0 0 13 13">
                <path d="M1 1h4v4H1zM1 8h4v4H1z" fill="none" stroke="#333" />
                <path d="M7 2h5M7 4h5M7 9h5M7 11h5" stroke="#555" />
              </svg>
            </CatButton>
            <CatButton>
              <svg width="15" height="15" viewBox="0 0 15 15">
                <text x="0" y="7" fontSize="7" fontWeight="700" fill="#333" fontFamily="Liberation Sans, sans-serif">A</text>
                <text x="0" y="14" fontSize="7" fontWeight="700" fill="#333" fontFamily="Liberation Sans, sans-serif">Z</text>
                <path d="M10 3v9M8 9l2 3 2-3" fill="none" stroke="#1b6fb0" strokeWidth="1.500" />
              </svg>
            </CatButton>
            <ToolSep />
            <Wrench size={13} color="#a8aebb" fill="#a8aebb" />
          </PropsBar>
          <PropsList>
            {sideRows.map((r) => (
              <SideRow key={r.n} $head={r.head}>
                <SideStrip>
                  {r.exp === 'plus' && <PlusExpander />}
                  {r.exp === 'minus' && <Expander />}
                </SideStrip>
                <SideName $off={r.off} $bold={r.head}>{r.n}</SideName>
                {!r.head && <SideValue $off={r.off}>{r.v}</SideValue>}
              </SideRow>
            ))}
          </PropsList>
          <PropsDesc>(Identity)</PropsDesc>
        </Panel>
      </Workspace>

      <Status>
        <StatusText>Item(s) Saved</StatusText>
      </Status>

      <Dialog>
        <DialogTitle>
          <span>Foreign Key Relationships</span>
          <DialogIcons>
            <span>?</span>
            <X size={13} color="#333" />
          </DialogIcons>
        </DialogTitle>
        <DialogBody>
          <FieldLabel>Selected Relationship:</FieldLabel>
          <Panes>
            <ListPane />
            <RightPanes>
              <HintPane>Use the add button to create a new relationship.</HintPane>
              <DetailPane />
            </RightPanes>
          </Panes>
          <DialogFooter>
            <FooterLeft>
              <DlgButton>Add</DlgButton>
              <DlgButton $off>Delete</DlgButton>
            </FooterLeft>
            <DlgButton $primary>Close</DlgButton>
          </DialogFooter>
        </DialogBody>
      </Dialog>
      <CursorGlow />
      <CursorArrow width="10" height="16" viewBox="0 0 10 16">
        <path d="M1 1v12l3-2.500 2 4.500 2-1-2-4h3.500z" fill="#fff" stroke="#222" strokeWidth="1" />
      </CursorArrow>
    </Shell>
  );
}
